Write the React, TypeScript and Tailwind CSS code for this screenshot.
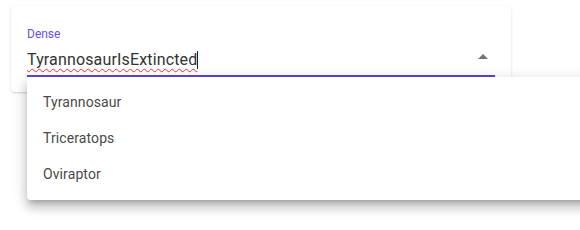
import React from "react";

export default function App() {
  return (
    <div className="relative w-[580px] h-[230px] bg-white overflow-hidden" style={{ fontFamily: "Roboto, 'Liberation Sans', sans-serif" }}>
      <div className="absolute left-[11px] top-[6px] w-[500px] h-[86px] rounded-[4px] bg-white shadow-[0_1px_3px_rgba(0,0,0,0.12),0_1px_1px_rgba(0,0,0,0.06)]">
        <div className="px-4 pt-[20px]">
          <div className="text-[12px] leading-[16px] text-[#6a4ee4]">Dense</div>
          <div className="relative flex items-center h-[30px] mt-[3px]">
            <span className="text-[16px] leading-[22px] tracking-[0.15px] text-[#333333] underline decoration-wavy decoration-[#e53935] decoration-[1px] underline-offset-[3px]">TyrannosaurIsExtincted</span>
            <span className="w-[1px] h-[18px] bg-[#222222]" />
            <svg className="absolute right-[7px] top-[9px]" width="10" height="5" viewBox="0 0 10 5">
              <path d="M0 5 L5 0 L10 5 Z" fill="#757575" />
            </svg>
          </div>
          <div className="h-[2px] bg-[#5a48d6]" />
        </div>
      </div>
      <div className="absolute left-[27px] top-[77px] w-[600px] rounded-[4px] bg-white pt-[7px] pb-2 shadow-[0_5px_5px_-3px_rgba(0,0,0,0.2),0_8px_10px_1px_rgba(0,0,0,0.14),0_3px_14px_2px_rgba(0,0,0,0.12)]">
        {["Tyrannosaur", "Triceratops", "Oviraptor"].map((t) => (
          <div key={t} className="h-[36px] flex items-center pl-4 text-[14px] tracking-[0.1px] text-[#4a4a4a]">
            {t}
          </div>
        ))}
      </div>
    </div>
  );
}
